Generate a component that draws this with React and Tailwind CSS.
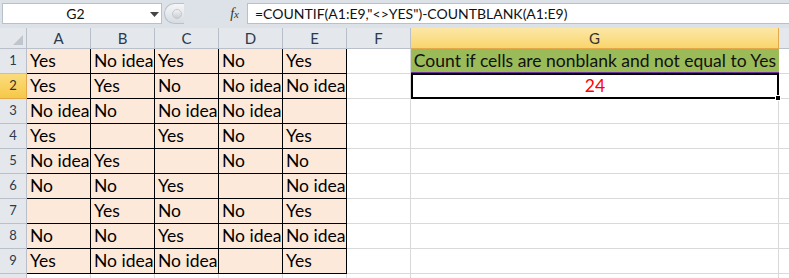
import React from "react";

const cols = ["A", "B", "C", "D", "E", "F", "G"];

const data = [
  ["Yes", "No idea", "Yes", "No", "Yes"],
  ["Yes", "Yes", "No", "No idea", "No idea"],
  ["No idea", "No", "No idea", "No idea", ""],
  ["Yes", "", "Yes", "No", "Yes"],
  ["No idea", "Yes", "", "No", "No"],
  ["No", "No", "Yes", "", "No idea"],
  ["", "Yes", "No", "No", "Yes"],
  ["No", "No", "Yes", "No idea", "No idea"],
  ["Yes", "No idea", "No idea", "", "Yes"],
];

function FormulaBar() {
  return (
    <div className="h-[28px] bg-[#dde2e8] flex items-start pt-[3px] pl-[2px]">
      <div className="w-[160px] h-[21px] bg-white border border-[#b7c0cb] flex items-center relative">
        <span className="w-[145px] text-center text-[14px] text-[#111]">G2</span>
        <svg width="9" height="5" viewBox="0 0 9 5" className="absolute left-[147px] top-[8px]">
          <path d="M0 0 L9 0 L4.5 5 Z" fill="#444" />
        </svg>
      </div>
      <div className="w-[85px] h-[21px] flex items-center">
        <div className="ml-[2px] h-[21px] w-[20px] rounded-l-full bg-gradient-to-b from-[#f4f6f8] to-[#d7dce2] border border-[#b7c0cb] border-r-0 flex items-center justify-center">
          <div className="w-[10px] h-[10px] rounded-full bg-gradient-to-b from-[#f2f2f2] to-[#c9ced4] border border-[#c5c9ce] ml-[4px]" />
        </div>
        <div className="flex-1 h-[21px] bg-[#dde2e8] flex items-center justify-end pr-[8px]">
          <span className="italic text-[14px] text-[#333]" style={{ fontFamily: "'Liberation Serif', serif" }}>
            f<span className="text-[11px]">x</span>
          </span>
        </div>
      </div>
      <div className="flex-1 h-[21px] bg-white border border-[#b7c0cb] border-r-0 flex items-center pl-[7px] text-[14px] text-[#111]">
        =COUNTIF(A1:E9,"&lt;&gt;YES")-COUNTBLANK(A1:E9)
      </div>
    </div>
  );
}

export default function App() {
  const colWidth = (i) => (i === 6 ? "w-[368px]" : "w-[64px]");

  return (
    <div className="w-[789px] h-[278px] overflow-hidden bg-white" style={{ fontFamily: "Lato, 'Liberation Sans', sans-serif" }}>
      <FormulaBar />

      {/* column headers */}
      <div className="flex h-[21px]">
        <div className="w-[27px] shrink-0 bg-[#e4e8ed] border-r border-b border-[#b9c0c9] relative">
          <svg width="10" height="10" viewBox="0 0 10 10" className="absolute right-[3px] bottom-[3px]">
            <path d="M10 0 L10 10 L0 10 Z" fill="#bfc5cc" />
          </svg>
        </div>
        {cols.map((c, i) => (
          <div
            key={c}
            className={`${colWidth(i)} shrink-0 flex items-center justify-center text-[15px] border-r border-b ${
              c === "G"
                ? "bg-gradient-to-b from-[#fce7a6] to-[#f9d56a] border-r-[#e2a84a] border-b-[#e2a84a] text-[#333]"
                : "bg-[#e4e8ed] border-[#b9c0c9] text-[#2b3a4d]"
            }`}
          >
            {c}
          </div>
        ))}
        <div className="flex-1 bg-[#e4e8ed] border-b border-[#b9c0c9]" />
      </div>

      {/* rows */}
      {data.map((row, r) => (
        <div key={r} className="flex h-[25px]">
          <div
            className={`w-[27px] shrink-0 flex items-center justify-center text-[13px] border-r border-b ${
              r === 1
                ? "bg-gradient-to-b from-[#fbdc7c] to-[#f5c846] border-[#e2a84a] text-[#333]"
                : "bg-[#e4e8ed] border-[#b9c0c9] text-[#2b3a4d]"
            }`}
          >
            {r + 1}
          </div>
          {row.map((v, i) => (
            <div
              key={i}
              className="w-[64px] shrink-0 bg-[#fde9d9] border-r border-b border-black flex items-end pb-[1px] pl-[3px] text-[17.5px] leading-[22px] text-black whitespace-nowrap overflow-visible"
            >
              {v}
            </div>
          ))}
          <div className="w-[64px] shrink-0 border-r border-b border-[#d9d9d9]" />
          {r === 0 && (
            <div className="w-[368px] shrink-0 bg-[#9bbb59] border-b-2 border-[#7030a0] flex items-end justify-center text-[17.5px] leading-[22px] text-[#111] whitespace-nowrap">
              Count if cells are nonblank and not equal to Yes
            </div>
          )}
          {r === 1 && (
            <div className="w-[368px] shrink-0 border-2 border-black -mt-[1px] flex items-center justify-center text-[17.5px] text-[#ff0000] relative">
              24
              <div className="absolute right-[-4px] bottom-[-4px] w-[6px] h-[6px] bg-black border border-white" />
            </div>
          )}
          {r > 1 && <div className="w-[368px] shrink-0 border-r border-b border-[#d9d9d9]" />}
          <div className="flex-1 border-b border-[#d9d9d9]" />
        </div>
      ))}
      <div className="flex h-[25px]">
        <div className="w-[27px] shrink-0 bg-[#e4e8ed] border-r border-[#b9c0c9]" />
        {cols.map((c, i) => (
          <div key={c} className={`${colWidth(i)} shrink-0 border-r border-[#d9d9d9]`} />
        ))}
      </div>
    </div>
  );
}
